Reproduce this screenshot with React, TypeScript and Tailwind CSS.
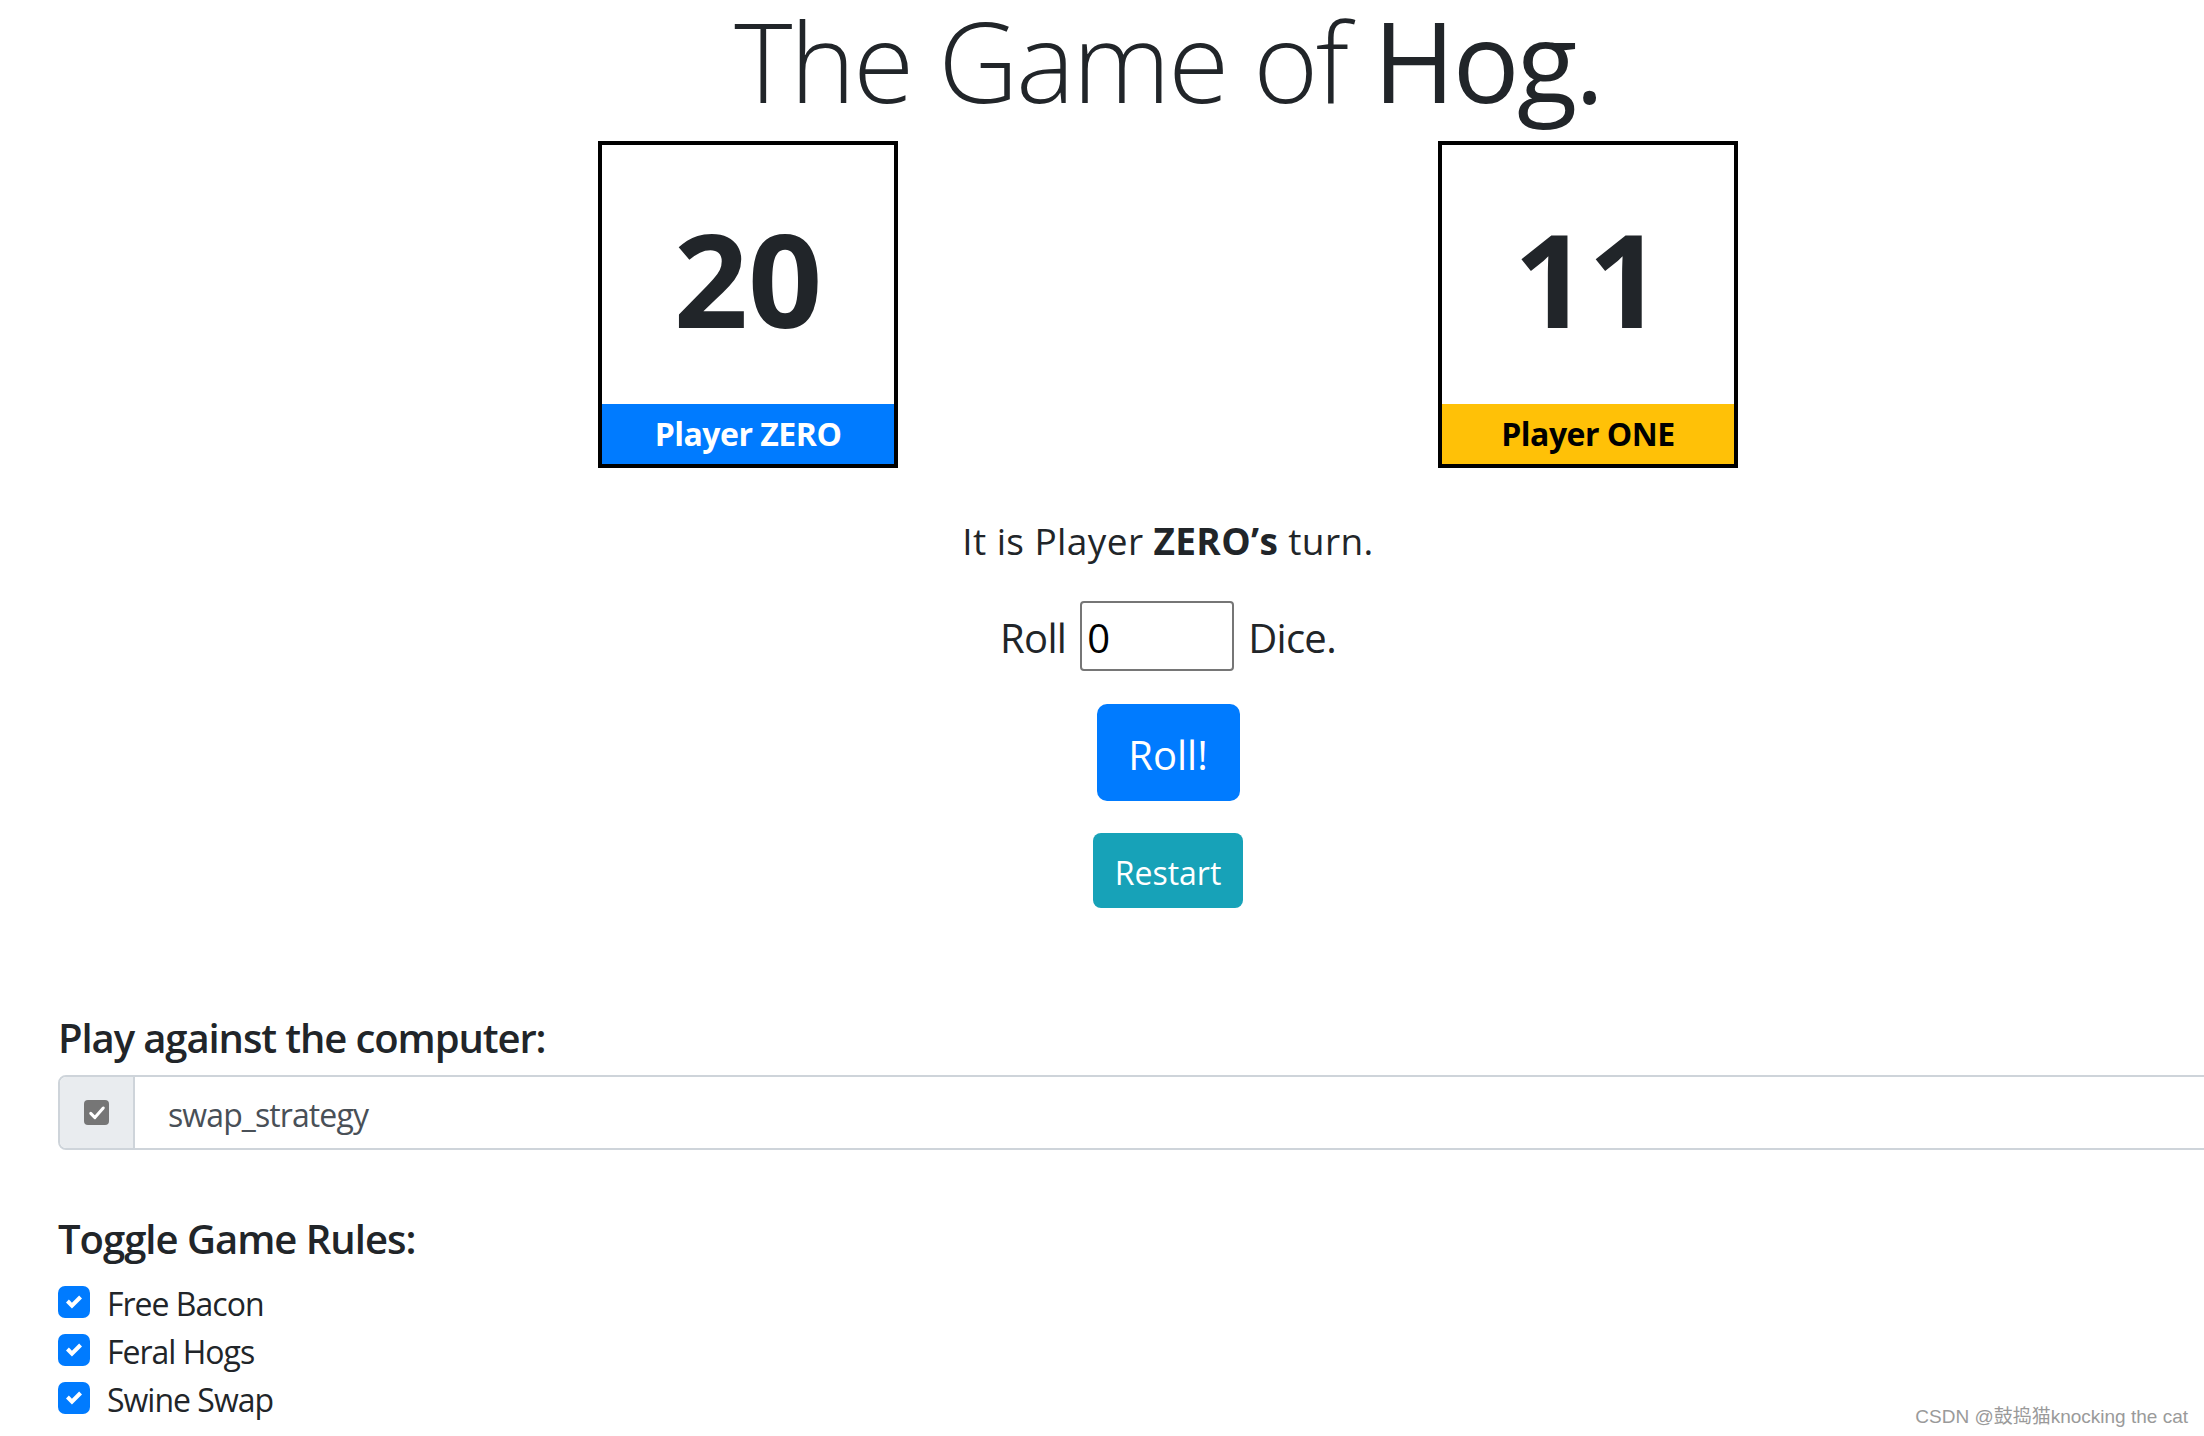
import { useState } from "react";

type Player = {
  name: string;
  score: number;
  bar: string;
};

const PLAYERS: Player[] = [
  { name: "Player ZERO", score: 20, bar: "bg-[#007bff] text-white" },
  { name: "Player ONE", score: 11, bar: "bg-[#ffc107] text-black" },
];

const RULES = ["Free Bacon", "Feral Hogs", "Swine Swap"];

function BlueCheck() {
  return (
    <svg viewBox="0 0 8 8" className="w-[16px] h-[16px]">
      <path fill="#fff" d="M6.564.75l-3.59 3.612-1.538-1.55L0 4.26l2.974 2.99L8 2.193z" />
    </svg>
  );
}

function ScoreCard({ player }: { player: Player }) {
  return (
    <div className="w-[300px] h-[327px] border-4 border-black flex flex-col bg-white">
      <div className="pt-[68px] text-center text-[130px] leading-none font-bold text-[#212529]">
        {player.score}
      </div>
      <div className={`mt-auto h-[60px] leading-[60px] text-center text-[32px] font-bold tracking-[-0.5px] ${player.bar}`}>
        {player.name}
      </div>
    </div>
  );
}

export default function App() {
  const [dice, setDice] = useState("0");
  const [strategy, setStrategy] = useState(true);
  const [rules, setRules] = useState([true, true, true]);

  return (
    <div className="relative w-full h-[1436px] overflow-hidden bg-white text-[#212529] font-['Open_Sans','Noto_Sans',sans-serif]">
      <div className="pl-[132px] flex flex-col items-center">
        <h1 className="text-center text-[111px] leading-[120px] font-light tracking-[-2.4px]">
          The Game of <span className="font-normal">Hog.</span>
        </h1>

        {/* score cards */}
        <div className="mt-[21px] flex justify-center gap-[540px]">
          {PLAYERS.map((p) => (
            <ScoreCard key={p.name} player={p} />
          ))}
        </div>

        <p className="mt-[45px] text-center text-[37px] leading-[56px] tracking-[0.4px]">
          It is Player <b className="font-bold">ZERO’s</b> turn.
        </p>

        {/* dice input */}
        <div className="mt-[32px] h-[70px] flex items-center justify-center text-[40px] leading-[70px] tracking-[-0.7px]">
          <span className="pt-[4px]">Roll</span>
          <input
            type="text"
            value={dice}
            onChange={(e) => setDice(e.target.value)}
            className="mx-[14px] w-[154px] h-[70px] px-[5px] pt-[3px] border-2 border-[#767676] rounded-[4px] text-[40px] text-black outline-none"
          />
          <span className="pt-[4px]">Dice.</span>
        </div>

        <button className="mt-[33px] w-[143px] h-[97px] pt-[4px] rounded-[10px] bg-[#007bff] text-white text-[40px] leading-none">
          Roll!
        </button>

        <button className="mt-[32px] w-[150px] h-[75px] pt-[4px] rounded-[8px] bg-[#17a2b8] text-white text-[32px] leading-none">
          Restart
        </button>
      </div>

      <div className="pl-[58px] flex flex-col">
        {/* computer opponent */}
        <h5 className="mt-[106px] text-[40px] leading-[48px] font-semibold tracking-[-1.1px]">
          Play against the computer:
        </h5>
        <div className="mt-[13px] w-[2220px] h-[75px] flex border-2 border-[#ced4da] rounded-[8px]">
          <div className="w-[75px] flex items-center justify-center bg-[#e9ecef] border-r-2 border-[#ced4da] rounded-l-[6px]">
            <button
              onClick={() => setStrategy(!strategy)}
              className="w-[25px] h-[25px] rounded-[4px] bg-[#767676] flex items-center justify-center"
            >
              {strategy && (
                <svg viewBox="0 0 24 24" className="w-[20px] h-[20px]">
                  <path d="M4.5 12.5l5 5L19.5 6" fill="none" stroke="#fff" strokeWidth="3.6" strokeLinecap="round" strokeLinejoin="round" />
                </svg>
              )}
            </button>
          </div>
          <div className="flex-1 flex items-center pl-[33px] pt-[5px] text-[32px] text-[#495057] tracking-[-0.9px]">
            swap_strategy
          </div>
        </div>

        {/* rules */}
        <h5 className="mt-[65px] text-[40px] leading-[48px] font-semibold tracking-[-1px]">
          Toggle Game Rules:
        </h5>
        <div className="mt-[15px] flex flex-col items-start">
          {RULES.map((rule, i) => (
            <label key={rule} className="h-[48px] flex items-center gap-[17px] text-[32px] leading-[48px] tracking-[-1px] cursor-pointer">
              <span
                onClick={() => setRules(rules.map((r, j) => (j === i ? !r : r)))}
                className={`w-[32px] h-[32px] rounded-[7px] flex items-center justify-center ${rules[i] ? "bg-[#007bff]" : "bg-white border-2 border-[#adb5bd]"}`}
              >
                {rules[i] && <BlueCheck />}
              </span>
              <span className="pt-[3px]">{rule}</span>
            </label>
          ))}
        </div>
      </div>

      {/* watermark */}
      <div className="absolute right-[16px] bottom-[10px] text-[19px] leading-[19px] text-[#9a9a9a] font-['Liberation_Sans','Noto_Sans_CJK_SC',sans-serif]">
        CSDN @鼓捣猫knocking the cat
      </div>
    </div>
  );
}
